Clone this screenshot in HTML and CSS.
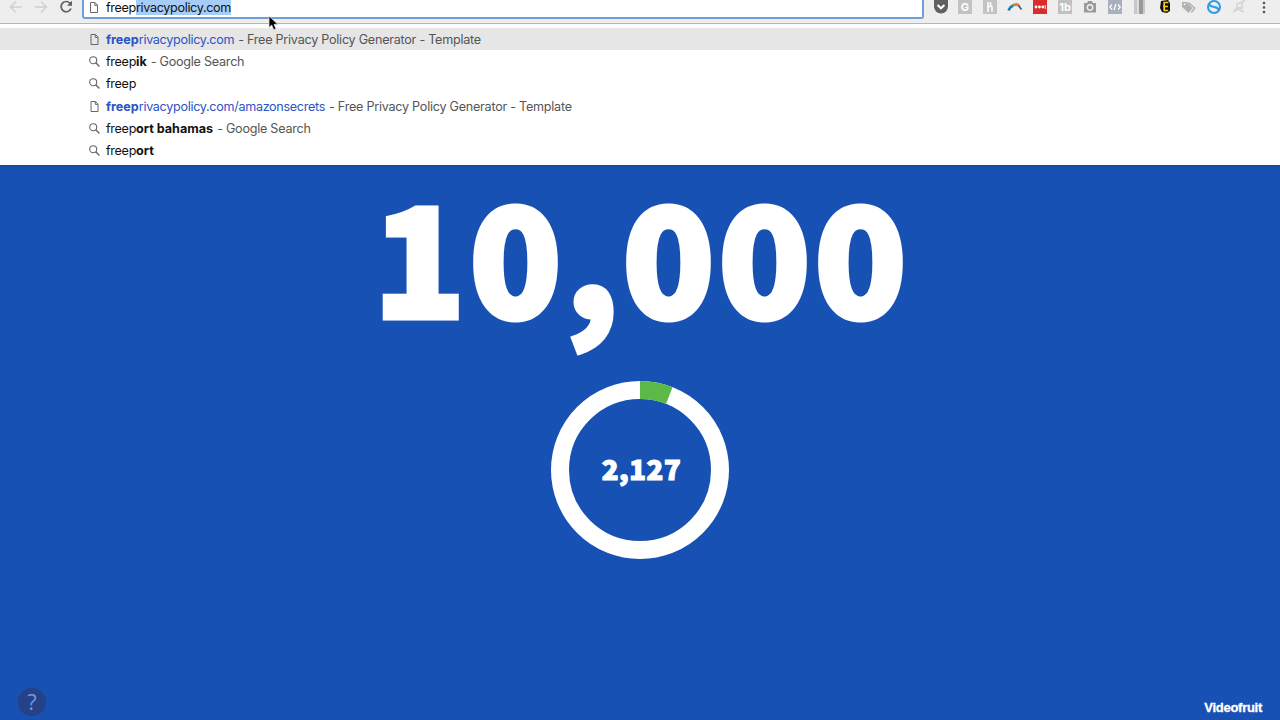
FILE: index.html
```
<!DOCTYPE html>
<html lang="en">
<head>
<meta charset="UTF-8">
<meta name="viewport" content="width=device-width, initial-scale=1.0">
<title>10,000</title>
<link rel="stylesheet" href="styles.css">
</head>
<body>
<svg class="defs" width="0" height="0">
    <symbol id="page" viewBox="0 0 8 11"><path d="M.5.5h4.500l2.500 2.600v7.400H.5zM4.800.8v2.600h2.500" fill="none" stroke="#666" stroke-width="1"/></symbol>
    <symbol id="search" viewBox="0 0 11 11"><path d="M6.800 6.800l3.600 3.600" stroke="#666" stroke-width="1.400"/><circle cx="4.200" cy="4.200" r="3.500" fill="none" stroke="#666" stroke-width="1.100"/></symbol>
</svg>

<!-- Browser toolbar -->
<div class="toolbar">
    <div class="nav">
        <svg width="14" height="14" viewBox="0 0 14 14"><path d="M13 7H1.500M7 1.500L1.500 7 7 12.500" fill="none" stroke="#d0d0d0" stroke-width="1.500"/></svg>
        <svg width="14" height="14" viewBox="0 0 14 14"><path d="M1 7h11.500M7 1.500L12.500 7 7 12.500" fill="none" stroke="#d0d0d0" stroke-width="1.500"/></svg>
        <svg width="14" height="14" viewBox="0 0 14 14"><path d="M11.300 3.500A5.100 5.100 0 1 0 12 8.500" fill="none" stroke="#5f5f5f" stroke-width="1.700"/><path d="M13 .8v5H8z" fill="#5f5f5f"/></svg>
    </div>
    <div class="address">
        <svg width="8" height="11"><use href="#page"/></svg>
        <span class="url">freep<span class="selected">rivacypolicy.com</span></span>
    </div>
    <div class="extensions">
        <svg width="16" height="14" viewBox="0 0 16 14"><path d="M1 0h14v6.500a7 7 0 0 1-14 0z" fill="#606063"/><path d="M4.600 5L8 8.300 11.400 5" fill="none" stroke="#fff" stroke-width="2"/></svg>
        <svg width="16" height="14" viewBox="0 0 16 14"><path d="M1 0h14v14H1z" fill="#c3c3c3"/><text x="8" y="11" text-anchor="middle" class="ext-text">G</text></svg>
        <svg width="16" height="14" viewBox="0 0 16 14"><path d="M1 0h14v14H1z" fill="#c3c3c3"/><path d="M6 2v10M6 7.500q4-3 4 0v4M8.500 2v3.500" fill="none" stroke="#fff" stroke-width="1.600"/></svg>
        <svg width="16" height="14" viewBox="0 0 16 14"><path d="M1.500 10.500Q3 6.500 6.500 5.500" fill="none" stroke="#2878b5" stroke-width="2.400"/><path d="M5 6Q7 4 9 5" fill="none" stroke="#43a37d" stroke-width="2.200"/><path d="M7.500 5.200Q10 3.500 12 6" fill="none" stroke="#ef7b2c" stroke-width="2.800"/><path d="M11.500 5.500l3 4" stroke="#285b8c" stroke-width="1.600"/></svg>
        <svg width="16" height="14" viewBox="0 0 16 14"><path d="M1 0h14v14H1z" fill="#db2b2b"/><circle cx="4" cy="7" r="1.400" fill="#fff"/><circle cx="7.400" cy="7" r="1.400" fill="#fff"/><circle cx="10.800" cy="7" r="1.400" fill="#fff"/><path d="M13.200 5v4" stroke="#fff" stroke-width=".9"/></svg>
        <svg width="16" height="14" viewBox="0 0 16 14"><path d="M1 0h14v14H1z" fill="#c1c1c1"/><text x="8" y="11" text-anchor="middle" class="ext-text">1b</text></svg>
        <svg width="16" height="14" viewBox="0 0 16 14"><path d="M2 3h3l1-2h4l1 2h3v9.500H2z" fill="#9a9a9a"/><circle cx="8" cy="7.500" r="2.700" fill="none" stroke="#eee" stroke-width="1.400"/></svg>
        <svg width="16" height="14" viewBox="0 0 16 14"><path d="M1 0h14v14H1z" fill="#a9b0bd"/><path d="M5 4.500L2.800 7 5 9.500M11 4.500L13.200 7 11 9.500M9 4L7 10" fill="none" stroke="#fff" stroke-width="1.200"/></svg>
        <svg width="16" height="14" viewBox="0 0 16 14"><path d="M2 0h3v14H2z" fill="#c8c8c8"/><path d="M5 0h3v14H5z" fill="#ddd"/><path d="M7 0h4v14H7z" fill="#999"/><path d="M11 0h2v14h-2z" fill="#c8c8c8"/></svg>
        <svg width="16" height="14" viewBox="0 0 16 14"><path d="M4 1l7-1 2 3v8l-3 2-5-1-2-4z" fill="#111"/><path d="M11.500 2.500H7.200v8h4M6 6.500h5" fill="none" stroke="#f5cb24" stroke-width="1.700"/></svg>
        <svg width="16" height="14" viewBox="0 0 16 14"><path d="M1 2h5l5.500 6-4 5L1 7z" fill="#b1b1b1"/><path d="M7.500 2.500L13.800 8l-3.500 4.500" fill="none" stroke="#b1b1b1" stroke-width="1.500"/><circle cx="3.600" cy="4.300" r="1" fill="#eee"/></svg>
        <svg width="16" height="14" viewBox="0 0 16 14"><circle cx="8" cy="7" r="6" fill="#eee" stroke="#2d9be3" stroke-width="2"/><path d="M3 4.500Q5 7 8 7t5 3" fill="none" stroke="#2d9be3" stroke-width="2.200"/></svg>
        <svg width="16" height="14" viewBox="0 0 16 14"><path d="M2 12l5-3 6 3M6 4l5-2v6H6zM11 2l3-2M6 8l-3 3" fill="none" stroke="#d5d5d5" stroke-width="1.800"/></svg>
        <svg width="16" height="14" viewBox="0 0 16 14"><circle cx="8" cy="3" r="1.300" fill="#555"/><circle cx="8" cy="7.500" r="1.300" fill="#555"/><circle cx="8" cy="12" r="1.300" fill="#555"/></svg>
    </div>
</div>

<!-- Address suggestions -->
<ul class="suggestions">
    <li class="active"><svg><use href="#page"/></svg><span class="link"><b>freep</b>rivacypolicy.com</span><span class="title">- Free Privacy Policy Generator - Template</span></li>
    <li><svg><use href="#search"/></svg><span>freep<b>ik</b></span><span class="title">- Google Search</span></li>
    <li><svg><use href="#search"/></svg><span>freep</span></li>
    <li><svg><use href="#page"/></svg><span class="link"><b>freep</b>rivacypolicy.com/amazonsecrets</span><span class="title">- Free Privacy Policy Generator - Template</span></li>
    <li><svg><use href="#search"/></svg><span>freep<b>ort bahamas</b></span><span class="title">- Google Search</span></li>
    <li><svg><use href="#search"/></svg><span>freep<b>ort</b></span></li>
</ul>

<!-- Page -->
<div class="content">
    <h1>10,000</h1>
    <div class="ring">
        <svg width="178" height="178" viewBox="0 0 178 178">
            <circle cx="89" cy="89" r="80" fill="none" stroke="#fff" stroke-width="18"/>
            <path d="M89 0A89 89 0 0 1 121.500 6.200L115 23A71 71 0 0 0 89 18z" fill="#5cb947"/>
        </svg>
        <span class="count">2,127</span>
    </div>
    <div class="footer">
        <span class="help">?</span>
        <span class="brand">Videofruit</span>
    </div>
</div>

<svg class="cursor" width="13" height="19" viewBox="0 0 13 19"><path d="M1 1v11.500l2.700-2.400 2 4.600 2.300-1-2-4.400h3.800z" fill="#000" stroke="#ddd" stroke-width=".8"/></svg>
</body>
</html>
```
FILE: styles.css
```
* {
    box-sizing: border-box;
}

body {
    margin: 0;
    height: 720px;
    display: flex;
    flex-direction: column;
    overflow: hidden;
    background-color: #1851b4;
    font-family: Inter, "Liberation Sans", sans-serif;
    font-size: 12.6px;
    color: #111;
}

svg {
    display: block;
    flex: none;
}

.defs {
    position: absolute;
}

/* Toolbar */
.toolbar {
    height: 24px;
    flex: none;
    display: flex;
    align-items: flex-start;
    background-color: #eee;
    border-bottom: 1px solid #b5b5b5;
}

.nav {
    width: 82px;
    display: flex;
    gap: 11px;
    padding-left: 9px;
}

.address {
    width: 842px;
    height: 19px;
    display: flex;
    padding: 2px 0 0 6px;
    background-color: #fff;
    border: 2px solid #709fd8;
    border-top: 0;
    border-radius: 0 0 3px 3px;
}

.url {
    height: 15px;
    margin: -2px 0 0 8px;
    line-height: 16px;
    letter-spacing: -0.33px;
}

.selected {
    display: inline-block;
    height: 15px;
    background-color: #a5cdf8;
}

.extensions {
    display: flex;
    gap: 8.9px;
    padding-left: 8.5px;
}

.ext-text {
    font-size: 11px;
    font-weight: bold;
    fill: #fff;
}

/* Suggestions */
.suggestions {
    height: 141px;
    flex: none;
    margin: 0;
    padding: 4px 0 0;
    list-style: none;
    background-color: #fff;
}

.suggestions li {
    height: 22.2px;
    display: flex;
    align-items: center;
    padding: 1px 0 0 89px;
    white-space: nowrap;
    letter-spacing: -0.31px;
}

.suggestions svg {
    width: 11px;
    height: 11px;
    margin-right: 6px;
}

.suggestions b {
    letter-spacing: 0;
}

.suggestions .active {
    background-color: #e6e6e6;
}

.link {
    color: #2c54c6;
}

.title {
    margin-left: 4px;
    color: #555;
    letter-spacing: -0.25px;
}

/* Counter */
.content {
    flex: 1;
    display: flex;
    flex-direction: column;
    align-items: center;
    color: #fff;
    box-shadow: inset 0 4px 3px -3px rgba(0, 0, 0, 0.2);
}

h1 {
    height: 216px;
    margin: 0;
    padding-left: 4px;
    line-height: 175px;
    font-family: "Noto Sans CJK JP", sans-serif;
    font-size: 151px;
    font-weight: 900;
    letter-spacing: 4px;
    -webkit-text-stroke: 5px #fff;
}

.ring {
    display: grid;
    place-items: center;
}

.ring svg,
.count {
    grid-area: 1 / 1;
}

.count {
    padding: 0 0 4px 3px;
    font-family: "Noto Sans CJK JP", sans-serif;
    font-size: 27.5px;
    font-weight: 900;
    line-height: 30px;
    letter-spacing: 0.6px;
    -webkit-text-stroke: 1.2px #fff;
}

.footer {
    width: 100%;
    margin-top: auto;
    display: flex;
    justify-content: space-between;
    padding: 0 18px 4px;
}

.help {
    width: 28px;
    height: 28px;
    border-radius: 50%;
    background-color: #244285;
    color: #7597e2;
    font-family: "Open Sans", sans-serif;
    font-size: 21px;
    line-height: 28px;
    text-align: center;
}

.brand {
    margin-top: 12px;
    font-family: "Liberation Sans", sans-serif;
    font-size: 13px;
    font-weight: bold;
    line-height: 15px;
    letter-spacing: -0.28px;
    -webkit-text-stroke: 0.3px #fff;
}

.cursor {
    position: absolute;
    left: 268px;
    top: 15px;
}
```
